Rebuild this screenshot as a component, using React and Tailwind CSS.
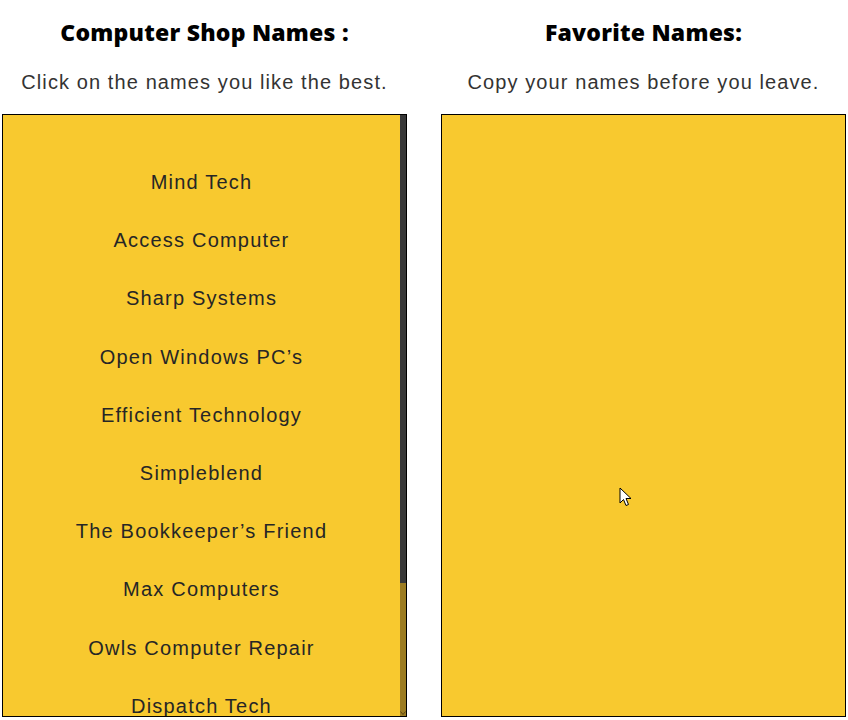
import { useState } from 'react';

const names = [
  'Mind Tech',
  'Access Computer',
  'Sharp Systems',
  'Open Windows PC’s',
  'Efficient Technology',
  'Simpleblend',
  'The Bookkeeper’s Friend',
  'Max Computers',
  'Owls Computer Repair',
  'Dispatch Tech',
];

function Cursor() {
  return (
    <svg width="14" height="20" viewBox="0 0 14 20" className="absolute left-[619px] top-[487px]">
      <path d="M1 1 L1 16 L4.5 12.5 L7 18.5 L9.5 17.5 L7 11.5 L12 11.5 Z" fill="#fff" stroke="#000" strokeWidth="1" strokeLinejoin="round" />
    </svg>
  );
}

export default function App() {
  const [favorites, setFavorites] = useState([]);

  return (
    <div className="relative w-[848px] h-[720px] bg-white overflow-hidden font-['Liberation_Sans',sans-serif]">
      <div className="flex gap-[34px] pl-[2px]">
        {/* --- left column --- */}
        <div className="w-[405px] flex flex-col">
          <h2 className="h-[64px] pt-[17px] text-center text-[23px] leading-[30px] font-extrabold tracking-[0.01em] text-black font-['Open_Sans',sans-serif]">
            Computer Shop Names :
          </h2>
          <p className="h-[50px] pt-[6px] text-center text-[20px] leading-[24px] tracking-[0.055em] text-[#333]">
            Click on the names you like the best.
          </p>
          <div className="flex h-[603px] border border-black bg-[#f8c92f] overflow-hidden">
            <ul className="flex-1 pt-[38px]">
              {names.map((name) => (
                <li
                  key={name}
                  onClick={() => setFavorites((f) => [...f, name])}
                  className="py-[19px] text-center text-[20px] leading-[20.2px] tracking-[0.06em] text-[#262626] cursor-pointer"
                >
                  {name}
                </li>
              ))}
            </ul>
            {/* scrollbar */}
            <div className="w-[6px] flex flex-col bg-[#383838]">
              <div className="flex-1" />
              <div className="h-[133px] bg-[#9c7c22] flex items-end justify-center pb-[1px]">
                <svg width="6" height="4" viewBox="0 0 6 4">
                  <path d="M0.5 0.5 L3 3.5 L5.5 0.5" fill="none" stroke="#5a4510" strokeWidth="1" />
                </svg>
              </div>
            </div>
          </div>
        </div>

        {/* --- right column --- */}
        <div className="w-[405px] flex flex-col">
          <h2 className="h-[64px] pt-[17px] text-center text-[23px] leading-[30px] font-extrabold tracking-[0.01em] text-black font-['Open_Sans',sans-serif]">
            Favorite Names:
          </h2>
          <p className="h-[50px] pt-[6px] text-center text-[20px] leading-[24px] tracking-[0.055em] text-[#333]">
            Copy your names before you leave.
          </p>
          <div className="h-[603px] border border-black bg-[#f8c92f]">
            {favorites.map((name, i) => (
              <p key={i} className="py-[19px] text-center text-[20px] text-[#262626]">
                {name}
              </p>
            ))}
          </div>
        </div>
      </div>
      <Cursor />
    </div>
  );
}
